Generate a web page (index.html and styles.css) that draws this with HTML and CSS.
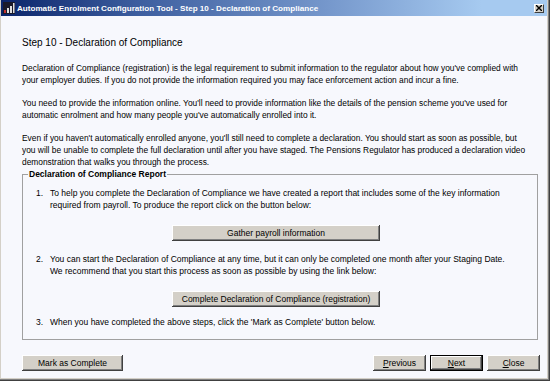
FILE: index.html
```html
<!DOCTYPE html>
<html>
<head>
<meta charset="utf-8">
<link rel="stylesheet" href="styles.css">
</head>
<body>
<div class="window">
  <div class="titlebar">
    <svg class="appicon" width="12" height="12" viewBox="0 0 12 12">
      <rect x="0" y="0" width="12" height="12" fill="#1a1a2a"/>
      <rect x="1" y="8" width="2" height="3" fill="#c03030"/>
      <rect x="4" y="6" width="2" height="5" fill="#e0e0e0"/>
      <rect x="7" y="4" width="2" height="7" fill="#e0e0e0"/>
      <rect x="10" y="1" width="1.5" height="10" fill="#e0e0e0"/>
    </svg>
    <span class="title">Automatic Enrolment Configuration Tool - Step 10 - Declaration of Compliance</span>
    <span class="closebtn">
      <svg width="6" height="6" viewBox="0 0 6 6"><path d="M0 0L6 6M6 0L0 6" stroke="#000" stroke-width="1.4"/></svg>
    </span>
  </div>
  <div class="content">
    <h1 class="heading">Step 10 - Declaration of Compliance</h1>
    <p class="para">Declaration of Compliance (registration) is the legal requirement to submit information to the regulator about how you've complied with<br>your employer duties. If you do not provide the information required you may face enforcement action and incur a fine.</p>
    <p class="para">You need to provide the information online. You'll need to provide information like the details of the pension scheme you've used for<br>automatic enrolment and how many people you've automatically enrolled into it.</p>
    <p class="para last">Even if you haven't automatically enrolled anyone, you'll still need to complete a declaration. You should start as soon as possible, but<br>you will be unable to complete the full declaration until after you have staged. The Pensions Regulator has produced a declaration video<br>demonstration that walks you through the process.</p>
    <fieldset class="group">
      <legend class="legend">Declaration of Compliance Report</legend>
      <div class="item">
        <span class="num">1.</span>
        <span class="itext">To help you complete the Declaration of Compliance we have created a report that includes some of the key information<br>required from payroll. To produce the report click on the button below:</span>
      </div>
      <div class="btnrow first"><button class="btn wide">Gather payroll information</button></div>
      <div class="item second">
        <span class="num">2.</span>
        <span class="itext">You can start the Declaration of Compliance at any time, but it can only be completed one month after your Staging Date.<br>We recommend that you start this process as soon as possible by using the link below:</span>
      </div>
      <div class="btnrow secondbtn"><button class="btn wide">Complete Declaration of Compliance (registration)</button></div>
      <div class="item third">
        <span class="num">3.</span>
        <span class="itext">When you have completed the above steps, click the 'Mark as Complete' button below.</span>
      </div>
    </fieldset>
    <div class="footer">
      <button class="btn mark">Mark as Complete</button>
      <div class="navbtns">
        <button class="btn nav"><u>P</u>revious</button>
        <button class="btn nav default"><u>N</u>ext</button>
        <button class="btn nav"><u>C</u>lose</button>
      </div>
    </div>
  </div>
</div>
</body>
</html>
```
FILE: styles.css
```css
html, body {
  margin: 0;
  padding: 0;
}
body {
  font-family: "Liberation Sans", Arial, sans-serif;
  background: #d4d0c8;
}
.window {
  width: 550px;
  height: 381px;
  box-sizing: border-box;
  padding: 0 3px 3px 1px;
  background: #d4d0c8;
  box-shadow: inset -1px -1px 0 #404040, inset -2px -2px 0 #808080;
  display: flex;
  flex-direction: column;
}
.titlebar {
  height: 16px;
  flex: none;
  display: flex;
  align-items: center;
  background: linear-gradient(to right, #0a246a 0%, #3d5e9f 25%, #7698cc 60%, #a6caf0 88%, #a6caf0 100%);
  padding-left: 2px;
  padding-right: 3px;
}
.appicon {
  flex: none;
  margin-right: 2px;
}
.title {
  color: #fff;
  font-weight: bold;
  font-size: 8.1px;
  white-space: nowrap;
  flex: 1;
}
.closebtn {
  width: 10px;
  height: 9px;
  box-sizing: border-box;
  background: #d4d0c8;
  border: 1px solid;
  border-color: #fff #404040 #404040 #fff;
  display: flex;
  align-items: center;
  justify-content: center;
}
.content {
  flex: 1;
  background: #f7f8fd;
  padding: 0 9px 0 21px;
  display: flex;
  flex-direction: column;
}
.heading {
  font-size: 10px;
  font-weight: normal;
  line-height: 12px;
  margin: 21px 0 13px 0;
  color: #000;
}
.para {
  font-size: 8.4px;
  line-height: 12px;
  margin: 0 0 11px 0;
  white-space: nowrap;
  color: #000;
}
.para.last {
  margin-bottom: 0;
}
.group {
  margin: 0;
  border: 1px solid #a0a0a0;
  padding: 7px 0 11px 0;
  min-width: 0;
}
.legend {
  font-size: 8.5px;
  font-weight: bold;
  line-height: 12px;
  padding: 0 1px;
  margin-left: 5px;
}
.item {
  display: flex;
  font-size: 8.5px;
  line-height: 12px;
  white-space: nowrap;
}
.num {
  width: 14px;
  padding-left: 13px;
  flex: none;
}
.btnrow {
  display: flex;
  padding-left: 149px;
}
.btnrow.first {
  margin-top: 14px;
}
.item.second {
  margin-top: 12px;
}
.btnrow.secondbtn {
  margin-top: 14px;
}
.item.third {
  margin-top: 9px;
}
.btn {
  font-family: "Liberation Sans", Arial, sans-serif;
  font-size: 8.5px;
  height: 16px;
  box-sizing: border-box;
  background: #d4d0c8;
  color: #000;
  border: none;
  padding: 0;
  margin: 0;
  box-shadow: inset -1px -1px 0 #404040, inset 1px 1px 0 #fff, inset -2px -2px 0 #808080;
}
.btn.wide {
  width: 208px;
}
.footer {
  display: flex;
  justify-content: space-between;
  margin-top: 15px;
  margin-right: -2px;
}
.btn.mark {
  width: 101px;
}
.navbtns {
  display: flex;
  gap: 4px;
}
.btn.nav {
  width: 53px;
}
.btn.default {
  box-shadow: inset 0 0 0 1px #000, inset -2px -2px 0 #404040, inset 2px 2px 0 #fff, inset -3px -3px 0 #808080;
}
```
